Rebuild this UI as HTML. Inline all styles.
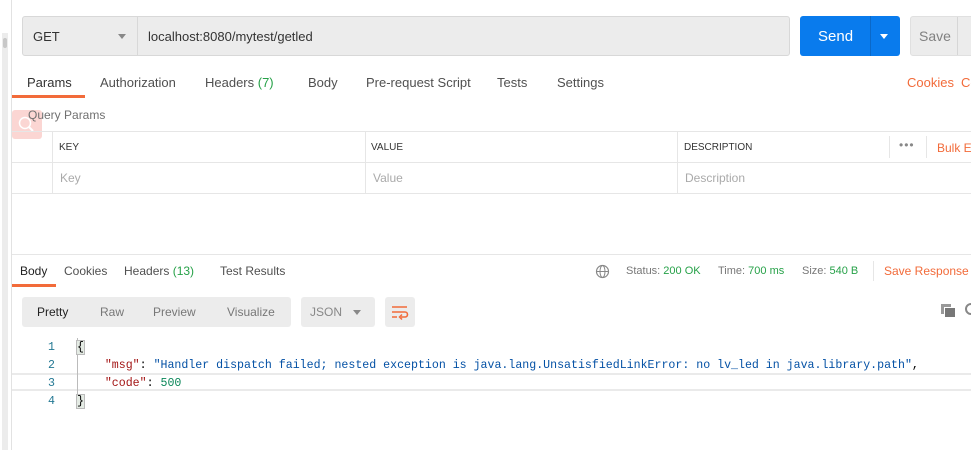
<!DOCTYPE html>
<html><head><meta charset="utf-8"><style>
*{margin:0;padding:0;box-sizing:border-box}
body{width:971px;height:450px;overflow:hidden;background:#fff;font-family:"Liberation Sans",sans-serif;font-size:12px;color:#505050;position:relative}
.a{position:absolute;white-space:nowrap}
.mono{font-family:"Liberation Mono",monospace;font-size:11.6px}
</style></head><body>
<div class="a" style="left:2px;top:33px;width:6px;height:417px;background:#ececec"></div>
<div class="a" style="left:3px;top:38px;width:4px;height:10px;background:#c8c8c8;border-radius:2px"></div>
<div class="a" style="left:11px;top:0;width:1px;height:450px;background:#e2e2e2"></div>

<div class="a" style="left:22px;top:16px;width:768px;height:40px;background:#ececec;border:1px solid #d8d8d8;border-radius:3px"></div>
<div class="a" style="left:137px;top:17px;width:1px;height:38px;background:#d8d8d8"></div>
<div class="a" style="left:33px;top:29px;font-size:13px;color:#333">GET</div>
<div class="a" style="left:118px;top:34px;width:0;height:0;border-left:4px solid transparent;border-right:4px solid transparent;border-top:5px solid #888"></div>
<div class="a" style="left:148px;top:29px;font-size:13px;color:#333">localhost:8080/mytest/getled</div>
<div class="a" style="left:800px;top:16px;width:100px;height:40px;background:#097bed;border-radius:3px"></div>
<div class="a" style="left:870px;top:16px;width:1px;height:40px;background:#0a68c8"></div>
<div class="a" style="left:818px;top:28px;font-size:15px;color:#fff">Send</div>
<div class="a" style="left:880px;top:34px;border-left:4px solid transparent;border-right:4px solid transparent;border-top:5px solid #fff"></div>
<div class="a" style="left:910px;top:16px;width:70px;height:40px;background:#ececec;border-radius:3px;border:1px solid #e0e0e0"></div>
<div class="a" style="left:957px;top:17px;width:1px;height:38px;background:#d6d6d6"></div>
<div class="a" style="left:919px;top:28px;font-size:14px;color:#808080">Save</div>

<div class="a" style="left:27px;top:75px;font-size:13px;color:#333">Params</div>
<div class="a" style="left:12px;top:95px;width:73px;height:3px;background:#f26b3a"></div>
<div class="a" style="left:100px;top:75px;font-size:13px">Authorization</div>
<div class="a" style="left:205px;top:75px;font-size:13px">Headers <span style="color:#26a148">(7)</span></div>
<div class="a" style="left:308px;top:75px;font-size:13px">Body</div>
<div class="a" style="left:366px;top:75px;font-size:13px">Pre-request Script</div>
<div class="a" style="left:497px;top:75px;font-size:13px">Tests</div>
<div class="a" style="left:557px;top:75px;font-size:13px">Settings</div>
<div class="a" style="left:907px;top:75px;font-size:13px;color:#f26b3a">Cookies</div>
<div class="a" style="left:961px;top:75px;font-size:13px;color:#f26b3a">Co</div>

<div class="a" style="left:12px;top:110px;width:30px;height:29px;background:#fbd6d3;border-radius:3px"></div>
<svg class="a" style="left:16px;top:115px" width="22" height="20" viewBox="0 0 22 20"><circle cx="9" cy="8" r="5.5" fill="none" stroke="#fff" stroke-width="1.5"/><line x1="13" y1="12" x2="17" y2="16" stroke="#fff" stroke-width="2"/></svg>
<div class="a" style="left:28px;top:108px;font-size:12px;color:#707070">Query Params</div>

<div class="a" style="left:12px;top:131px;width:959px;height:1px;background:#e6e6e6"></div>
<div class="a" style="left:12px;top:162px;width:959px;height:1px;background:#e6e6e6"></div>
<div class="a" style="left:12px;top:193px;width:959px;height:1px;background:#e6e6e6"></div>
<div class="a" style="left:52px;top:132px;width:1px;height:61px;background:#e6e6e6"></div>
<div class="a" style="left:365px;top:132px;width:1px;height:61px;background:#e6e6e6"></div>
<div class="a" style="left:677px;top:132px;width:1px;height:61px;background:#e6e6e6"></div>
<div class="a" style="left:889px;top:136px;width:1px;height:22px;background:#e6e6e6"></div>
<div class="a" style="left:926px;top:136px;width:1px;height:22px;background:#e6e6e6"></div>
<div class="a" style="left:59px;top:142px;font-size:10px;color:#333">KEY</div>
<div class="a" style="left:371px;top:142px;font-size:10px;color:#333">VALUE</div>
<div class="a" style="left:684px;top:142px;font-size:10px;color:#333">DESCRIPTION</div>
<div class="a" style="left:899px;top:138px;font-size:12px;color:#888;letter-spacing:1px">•••</div>
<div class="a" style="left:937px;top:141px;font-size:12px;color:#f26b3a">Bulk E</div>
<div class="a" style="left:60px;top:171px;font-size:12px;color:#aaa">Key</div>
<div class="a" style="left:373px;top:171px;font-size:12px;color:#aaa">Value</div>
<div class="a" style="left:685px;top:171px;font-size:12px;color:#aaa">Description</div>

<div class="a" style="left:12px;top:254px;width:959px;height:1px;background:#e6e6e6"></div>
<div class="a" style="left:20px;top:264px;font-size:12px;color:#222">Body</div>
<div class="a" style="left:12px;top:284px;width:44px;height:3px;background:#f26b3a"></div>
<div class="a" style="left:64px;top:264px;font-size:12px">Cookies</div>
<div class="a" style="left:124px;top:264px;font-size:12px">Headers <span style="color:#26a148">(13)</span></div>
<div class="a" style="left:220px;top:264px;font-size:12px">Test Results</div>
<svg class="a" style="left:595px;top:264px" width="15" height="15" viewBox="0 0 15 15"><circle cx="7.5" cy="7.5" r="6" fill="none" stroke="#888" stroke-width="1.2"/><ellipse cx="7.5" cy="7.5" rx="2.5" ry="6" fill="none" stroke="#888" stroke-width="1"/><line x1="1.5" y1="7.5" x2="13.5" y2="7.5" stroke="#888"/></svg>
<div class="a" style="left:626px;top:265px;font-size:11px;color:#777">Status: <span style="color:#26a148">200 OK</span></div>
<div class="a" style="left:718px;top:265px;font-size:11px;color:#777">Time: <span style="color:#26a148">700 ms</span></div>
<div class="a" style="left:802px;top:265px;font-size:11px;color:#777">Size: <span style="color:#26a148">540 B</span></div>
<div class="a" style="left:873px;top:261px;width:1px;height:20px;background:#e6e6e6"></div>
<div class="a" style="left:884px;top:264px;font-size:12px;color:#f26b3a">Save Response</div>

<div class="a" style="left:22px;top:297px;width:269px;height:30px;background:#ececec;border-radius:3px"></div>
<div class="a" style="left:37px;top:305px;font-size:12px;color:#222">Pretty</div>
<div class="a" style="left:100px;top:305px;font-size:12px;color:#777">Raw</div>
<div class="a" style="left:153px;top:305px;font-size:12px;color:#777">Preview</div>
<div class="a" style="left:227px;top:305px;font-size:12px;color:#777">Visualize</div>
<div class="a" style="left:301px;top:297px;width:74px;height:30px;background:#ececec;border-radius:3px"></div>
<div class="a" style="left:310px;top:305px;font-size:12px;color:#888">JSON</div>
<div class="a" style="left:353px;top:310px;border-left:4px solid transparent;border-right:4px solid transparent;border-top:5px solid #888"></div>
<div class="a" style="left:385px;top:297px;width:30px;height:30px;background:#ececec;border-radius:3px"></div>
<svg class="a" style="left:390px;top:303px" width="20" height="18" viewBox="0 0 20 18"><path d="M2 4H17M2 9H15a2.5 2.5 0 0 1 0 5H11M2 14H7" fill="none" stroke="#f26b3a" stroke-width="1.6"/><path d="M12 11.5L9.5 14L12 16.5" fill="none" stroke="#f26b3a" stroke-width="1.5"/></svg>
<div class="a" style="left:941px;top:304px;width:10px;height:10px;background:#999"></div>
<div class="a" style="left:944px;top:307px;width:11px;height:10px;background:#777;border-top:1px solid #fff;border-left:1px solid #fff"></div>
<div class="a" style="left:965px;top:303px;width:12px;height:12px;border:2px solid #888;border-radius:50%"></div>

<div class="a" style="left:12px;top:373px;width:959px;height:2px;background:#eaeaea"></div>
<div class="a" style="left:12px;top:389px;width:959px;height:2px;background:#eaeaea"></div>
<div class="a" style="left:77px;top:338px;width:1px;height:70px;background:#bbb"></div>
<div class="a mono" style="left:48px;top:339px;color:#237893;line-height:18px;text-align:right">1<br>2<br>3<br>4</div>
<div class="a mono" style="left:77px;top:339px;line-height:18px;color:#000">
<span style="background:#e4ebe4;outline:1px solid #bbb">{</span><br>
&nbsp;&nbsp;&nbsp;&nbsp;<span style="color:#a31515">"msg"</span>: <span style="color:#0451a5">"Handler dispatch failed; nested exception is java.lang.UnsatisfiedLinkError: no lv_led in java.library.path"</span>,<br>
&nbsp;&nbsp;&nbsp;&nbsp;<span style="color:#a31515">"code"</span>: <span style="color:#098658">500</span><br>
<span style="background:#e4ebe4;outline:1px solid #bbb">}</span></div>
</body></html>
